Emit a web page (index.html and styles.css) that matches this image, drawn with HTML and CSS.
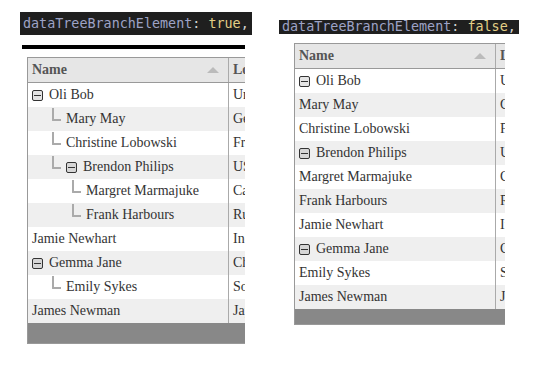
FILE: index.html
```html
<!DOCTYPE html>
<html lang="en">
<head>
    <meta charset="UTF-8">
    <title>Data Tree Branch Element</title>
    <link rel="stylesheet" href="styles.css">
</head>
<body>
    <div class="page">
        <!-- Mit Branch-Elementen -->
        <section class="demo demo-branch">
            <div class="snippet"><span class="prop">dataTreeBranchElement</span><span class="punct">: </span><span class="bool">true</span><span class="punct">,</span></div>
            <div class="rule"></div>
            <div class="grid">
                <div class="grid-head">
                    <div class="cell cell-name">Name <span class="sort"></span></div>
                    <div class="cell cell-loc">Location</div>
                </div>
                <div class="grid-row">
                    <div class="cell cell-name"><span class="toggle"></span>Oli Bob</div>
                    <div class="cell cell-loc">United Kingdom</div>
                </div>
                <div class="grid-row">
                    <div class="cell cell-name"><span class="branch lvl-1"></span>Mary May</div>
                    <div class="cell cell-loc">Germany</div>
                </div>
                <div class="grid-row">
                    <div class="cell cell-name"><span class="branch lvl-1"></span>Christine Lobowski</div>
                    <div class="cell cell-loc">France</div>
                </div>
                <div class="grid-row">
                    <div class="cell cell-name"><span class="branch lvl-1"></span><span class="toggle"></span>Brendon Philips</div>
                    <div class="cell cell-loc">USA</div>
                </div>
                <div class="grid-row">
                    <div class="cell cell-name"><span class="branch lvl-2"></span>Margret Marmajuke</div>
                    <div class="cell cell-loc">Canada</div>
                </div>
                <div class="grid-row">
                    <div class="cell cell-name"><span class="branch lvl-2"></span>Frank Harbours</div>
                    <div class="cell cell-loc">Russia</div>
                </div>
                <div class="grid-row">
                    <div class="cell cell-name">Jamie Newhart</div>
                    <div class="cell cell-loc">India</div>
                </div>
                <div class="grid-row">
                    <div class="cell cell-name"><span class="toggle"></span>Gemma Jane</div>
                    <div class="cell cell-loc">China</div>
                </div>
                <div class="grid-row">
                    <div class="cell cell-name"><span class="branch lvl-1"></span>Emily Sykes</div>
                    <div class="cell cell-loc">South Korea</div>
                </div>
                <div class="grid-row">
                    <div class="cell cell-name">James Newman</div>
                    <div class="cell cell-loc">Japan</div>
                </div>
                <div class="grid-foot"></div>
            </div>
        </section>

        <!-- Ohne Branch-Elemente -->
        <section class="demo demo-plain">
            <div class="snippet"><span class="prop">dataTreeBranchElement</span><span class="punct">: </span><span class="bool">false</span><span class="punct">,</span></div>
            <div class="grid">
                <div class="grid-head">
                    <div class="cell cell-name">Name <span class="sort"></span></div>
                    <div class="cell cell-loc">Location</div>
                </div>
                <div class="grid-row">
                    <div class="cell cell-name"><span class="toggle"></span>Oli Bob</div>
                    <div class="cell cell-loc">United Kingdom</div>
                </div>
                <div class="grid-row">
                    <div class="cell cell-name">Mary May</div>
                    <div class="cell cell-loc">Germany</div>
                </div>
                <div class="grid-row">
                    <div class="cell cell-name">Christine Lobowski</div>
                    <div class="cell cell-loc">France</div>
                </div>
                <div class="grid-row">
                    <div class="cell cell-name"><span class="toggle"></span>Brendon Philips</div>
                    <div class="cell cell-loc">USA</div>
                </div>
                <div class="grid-row">
                    <div class="cell cell-name">Margret Marmajuke</div>
                    <div class="cell cell-loc">Canada</div>
                </div>
                <div class="grid-row">
                    <div class="cell cell-name">Frank Harbours</div>
                    <div class="cell cell-loc">Russia</div>
                </div>
                <div class="grid-row">
                    <div class="cell cell-name">Jamie Newhart</div>
                    <div class="cell cell-loc">India</div>
                </div>
                <div class="grid-row">
                    <div class="cell cell-name"><span class="toggle"></span>Gemma Jane</div>
                    <div class="cell cell-loc">China</div>
                </div>
                <div class="grid-row">
                    <div class="cell cell-name">Emily Sykes</div>
                    <div class="cell cell-loc">South Korea</div>
                </div>
                <div class="grid-row">
                    <div class="cell cell-name">James Newman</div>
                    <div class="cell cell-loc">Japan</div>
                </div>
                <div class="grid-foot"></div>
            </div>
        </section>
    </div>
</body>
</html>
```

FILE: styles.css
```css
/* Grundlayout */
body {
    margin: 0;
    background-color: white;
    font-family: "Liberation Serif", serif;
    color: #333;
}

.page {
    display: flex;
    align-items: flex-start;
    padding: 12px 0 0 20px;
}

.demo {
    display: flex;
    flex-direction: column;
}

.demo-branch {
    width: 232px;
}

.demo-plain {
    width: 240px;
    margin-left: 27px;
    margin-top: 8px;
}

/* Code-Schnipsel oben */
.snippet {
    background-color: #1f1f1f;
    font-family: "DejaVu Sans Mono", "Liberation Mono", monospace;
    font-size: 13.4px;
    line-height: 15px;
    padding: 4px 3px;
    white-space: nowrap;
}

.demo-plain .snippet {
    padding: 0 3px;
    line-height: 14px;
}

.prop {
    color: #9da3c6;
}

.punct {
    color: #d4d4d4;
}

.bool {
    color: #e3cf86;
}

/* Schwarzer Balken */
.rule {
    height: 4px;
    width: 223px;
    margin: 10px 0 0 2px;
    background-color: #000;
}

/* Tabelle */
.grid {
    overflow: hidden;
    border: 1px solid #999;
    border-right: none;
    font-family: "Liberation Serif", serif;
    font-size: 14px;
    white-space: nowrap;
}

.demo-branch .grid {
    width: 217px;
    margin: 8px 0 0 7px;
}

.demo-plain .grid {
    width: 210px;
    margin: 9px 0 0 15px;
}

.grid-head,
.grid-row {
    display: flex;
    height: 24px;
}

.grid-head {
    background-color: #e6e6e6;
    border-bottom: 1px solid #999;
    font-weight: bold;
    color: #555;
}

.grid-row:nth-of-type(odd) {
    background-color: #efefef;
}

.cell {
    box-sizing: border-box;
    display: flex;
    align-items: center;
    padding: 0 4px;
    line-height: 16px;
}

.cell-name {
    flex: 0 0 201px;
    border-right: 1px solid #aaa;
}

.cell-loc {
    flex: 0 0 auto;
}

.grid-head .cell-name {
    justify-content: space-between;
}

/* Sortier-Pfeil */
.sort {
    width: 0;
    height: 0;
    margin-right: 5px;
    border-left: 6px solid transparent;
    border-right: 6px solid transparent;
    border-bottom: 6px solid #bbb;
}

/* Auf-/Zuklappen Knopf */
.toggle {
    position: relative;
    box-sizing: border-box;
    flex: 0 0 11px;
    height: 11px;
    margin-right: 6px;
    border: 1px solid #333;
    border-radius: 2px;
    background-color: rgba(0, 0, 0, 0.1);
}

.toggle::after {
    content: "";
    position: absolute;
    left: 1px;
    top: 4px;
    width: 7px;
    height: 1px;
    background-color: #333;
}

/* Baum-Linien */
.branch {
    flex: 0 0 auto;
    width: 7px;
    height: 11px;
    margin-top: -10px;
    margin-right: 5px;
    border-left: 2px solid #aaa;
    border-bottom: 2px solid #aaa;
    border-bottom-left-radius: 1px;
}

.branch.lvl-1 {
    margin-left: 20px;
}

.branch.lvl-2 {
    margin-left: 40px;
}

.grid-foot {
    background-color: #888;
}

.demo-branch .grid-foot {
    height: 20px;
}

.demo-plain .grid-foot {
    height: 15px;
}
```
